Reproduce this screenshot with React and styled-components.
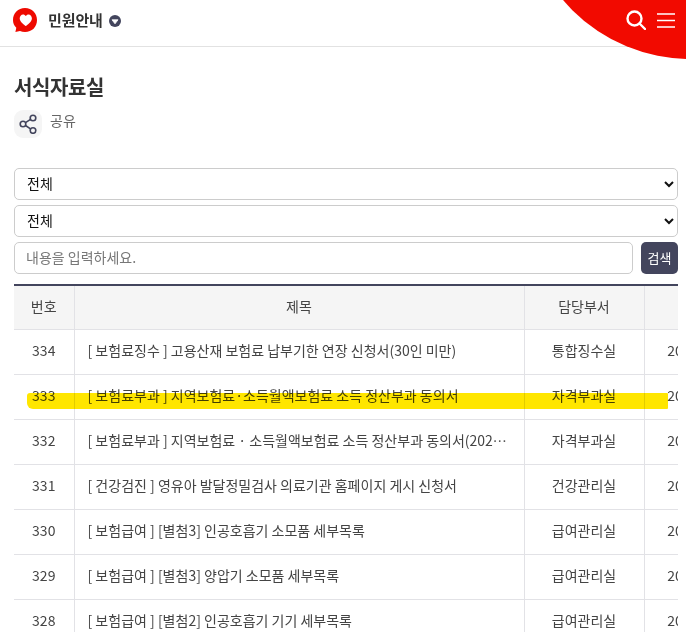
import React from "react";
import styled, { createGlobalStyle } from "styled-components";

const GlobalStyle = createGlobalStyle`
  html, body {
    margin: 0;
    padding: 0;
    background: #fff;
    overflow: hidden;
  }
  body {
    font-family: "Noto Sans CJK KR", "Noto Sans", sans-serif;
    color: #333;
  }
`;

const rows = [
  { no: 334, title: "[ 보험료징수 ] 고용산재 보험료 납부기한 연장 신청서(30인 미만)", dept: "통합징수실" },
  { no: 333, title: "[ 보험료부과 ] 지역보험료·소득월액보험료 소득 정산부과 동의서", dept: "자격부과실" },
  { no: 332, title: "[ 보험료부과 ] 지역보험료 · 소득월액보험료 소득 정산부과 동의서(2025년 귀속분)", dept: "자격부과실" },
  { no: 331, title: "[ 건강검진 ] 영유아 발달정밀검사 의료기관 홈페이지 게시 신청서", dept: "건강관리실" },
  { no: 330, title: "[ 보험급여 ] [별첨3] 인공호흡기 소모품 세부목록", dept: "급여관리실" },
  { no: 329, title: "[ 보험급여 ] [별첨3] 양압기 소모품 세부목록", dept: "급여관리실" },
  { no: 328, title: "[ 보험급여 ] [별첨2] 인공호흡기 기기 세부목록", dept: "급여관리실" },
];

const Page = styled.div`
  position: relative;
  width: 686px;
  height: 632px;
  overflow: hidden;
`;

const Header = styled.header`
  position: relative;
  box-sizing: border-box;
  height: 47px;
  display: flex;
  align-items: center;
  padding: 0 13px 7px;
  border-bottom: 1px solid #e2e2e2;
`;

const MenuTitle = styled.span`
  margin-left: 11px;
  font-size: 15px;
  letter-spacing: -0.1px;
  font-weight: 700;
  color: #333;
`;

const Caret = styled.svg`
  margin: 2px 0 0 6px;
  width: 12px;
  height: 12px;
`;

const RedCorner = styled.div`
  position: absolute;
  top: -273px;
  right: -170px;
  width: 332px;
  height: 332px;
  border-radius: 50%;
  background: #f20a00;
`;

const HeaderIcons = styled.div`
  position: absolute;
  top: 10px;
  right: 11px;
  display: flex;
  align-items: center;
  gap: 11px;
`;

const Content = styled.main`
  padding: 26px 8px 0 14px;
`;

const Title = styled.h1`
  margin: 0;
  font-size: 20px;
  line-height: 28px;
  letter-spacing: -0.4px;
  font-weight: 700;
  color: #333;
`;

const ShareRow = styled.div`
  margin-top: 9px;
  display: flex;
  align-items: flex-start;
  gap: 8px;
`;

const ShareIcon = styled.div`
  width: 28px;
  height: 28px;
  border-radius: 9px;
  background: #f5f5f5;
  display: flex;
  align-items: center;
  justify-content: center;
`;

const ShareLabel = styled.span`
  font-size: 14px;
  line-height: 20px;
  color: #666;
`;

const Filters = styled.form`
  margin-top: 30px;
  display: flex;
  flex-direction: column;
  gap: 5px;
`;

const Select = styled.select`
  width: 100%;
  height: 32px;
  padding: 0 8px 2px;
  border: 1px solid #ccc;
  border-radius: 5px;
  background: #fff;
  font-family: inherit;
  font-size: 14px;
  color: #111;
`;

const SearchRow = styled.div`
  display: flex;
  gap: 8px;
`;

const SearchInput = styled.input`
  flex: 1;
  min-width: 0;
  height: 32px;
  box-sizing: border-box;
  padding: 0 11px 2px;
  border: 1px solid #ccc;
  border-radius: 5px;
  font-family: inherit;
  font-size: 14px;
  &::placeholder {
    color: #777;
  }
`;

const SearchButton = styled.button`
  width: 37px;
  height: 32px;
  padding: 0 0 2px;
  border: 0;
  border-radius: 5px;
  background: #43455d;
  color: #fff;
  font-family: inherit;
  font-size: 13px;
`;

const TableWrap = styled.div`
  margin-top: 10px;
  overflow: hidden;
`;

const Table = styled.table`
  width: 748px;
  table-layout: fixed;
  border-collapse: collapse;
  border-top: 2px solid #43455d;
  font-size: 14px;
  color: #444;
`;

const HeadCell = styled.th`
  box-sizing: border-box;
  height: 44px;
  padding: 0 0 2px;
  background: #f5f5f5;
  border-right: 1px solid #e2e2e6;
  border-bottom: 1px solid #e2e2e6;
  font-weight: 400;
  text-align: center;
  &:last-child {
    border-right: 0;
  }
`;

const Cell = styled.td`
  box-sizing: border-box;
  height: 45px;
  padding: 0 ${(p) => (p.$left ? "14px" : "0")} 3px ${(p) => (p.$left ? "13px" : "0")};
  border-right: 1px solid #e2e2e6;
  border-bottom: 1px solid #e2e2e6;
  text-align: ${(p) => (p.$left ? "left" : "center")};
  white-space: nowrap;
  overflow: hidden;
  text-overflow: ellipsis;
  &:last-child {
    border-right: 0;
  }
`;

const Highlight = styled.div`
  position: absolute;
  left: 27px;
  top: 393px;
  width: 641px;
  height: 16px;
  background: #ffe600;
  mix-blend-mode: multiply;
  border-radius: 3px 1px 1px 6px;
  pointer-events: none;
`;

export default function App() {
  return (
    <Page>
      <GlobalStyle />
      <Header>
        <svg width="24" height="24" viewBox="0 0 24 24">
          <path
            d="M12 0C19 0 24 5 24 12s-5 12-12 12c-1.800 0-3.500-.3-5-1l-4.600 1 .9-4.200C1 17.600 0 15 0 12 0 5 5 0 12 0z"
            fill="#ee0a00"
          />
          <path
            d="M12.800 18c-1-.9-6.100-4-6.100-7.600 0-2.300 1.500-4 3.300-4 1.200 0 2.200.6 2.800 1.700.6-1.100 1.600-1.700 2.800-1.700 1.800 0 3.300 1.700 3.300 4 0 3.600-5.100 6.700-6.100 7.600z"
            fill="#fff"
          />
        </svg>
        <MenuTitle>민원안내</MenuTitle>
        <Caret viewBox="0 0 12 12">
          <circle cx="6" cy="6" r="6" fill="#43455d" />
          <path d="M3 4.800h6L6 8.800z" fill="#fff" stroke="#fff" strokeWidth="0.8" strokeLinejoin="round" />
        </Caret>
        <RedCorner />
        <HeaderIcons>
          <svg width="20" height="20" viewBox="0 0 20 20" fill="none" stroke="#fff" strokeWidth="2.400">
            <circle cx="8.500" cy="8.500" r="7" />
            <path d="M13.500 13.500L19 19" strokeLinecap="round" />
          </svg>
          <svg width="18" height="16" viewBox="0 0 18 16" fill="none" stroke="#fff" strokeWidth="1.600">
            <path d="M0 2h18M0 8.500h18M0 15h18" />
          </svg>
        </HeaderIcons>
      </Header>
      <Content>
        <Title>서식자료실</Title>
        <ShareRow>
          <ShareIcon>
            <svg width="18" height="20" viewBox="0 0 18 20" fill="none" stroke="#43455d" strokeWidth="1.600">
              <circle cx="14" cy="4" r="2.800" />
              <circle cx="4" cy="10" r="2.800" />
              <circle cx="14" cy="16.500" r="2.800" />
              <path d="M6.500 8.600l5-3.200M6.500 11.500l5 3.300" />
            </svg>
          </ShareIcon>
          <ShareLabel>공유</ShareLabel>
        </ShareRow>
        <Filters>
          <Select defaultValue="all">
            <option value="all">전체</option>
          </Select>
          <Select defaultValue="all">
            <option value="all">전체</option>
          </Select>
          <SearchRow>
            <SearchInput placeholder="내용을 입력하세요." />
            <SearchButton type="button">검색</SearchButton>
          </SearchRow>
        </Filters>
        <TableWrap>
          <Table>
            <colgroup>
              <col style={{ width: 60 }} />
              <col style={{ width: 450 }} />
              <col style={{ width: 120 }} />
              <col style={{ width: 118 }} />
            </colgroup>
            <thead>
              <tr>
                <HeadCell>번호</HeadCell>
                <HeadCell>제목</HeadCell>
                <HeadCell>담당부서</HeadCell>
                <HeadCell>등록일</HeadCell>
              </tr>
            </thead>
            <tbody>
              {rows.map((row) => (
                <tr key={row.no}>
                  <Cell>{row.no}</Cell>
                  <Cell $left>{row.title}</Cell>
                  <Cell>{row.dept}</Cell>
                  <Cell>2025-01-01</Cell>
                </tr>
              ))}
            </tbody>
          </Table>
        </TableWrap>
      </Content>
      <Highlight />
    </Page>
  );
}
